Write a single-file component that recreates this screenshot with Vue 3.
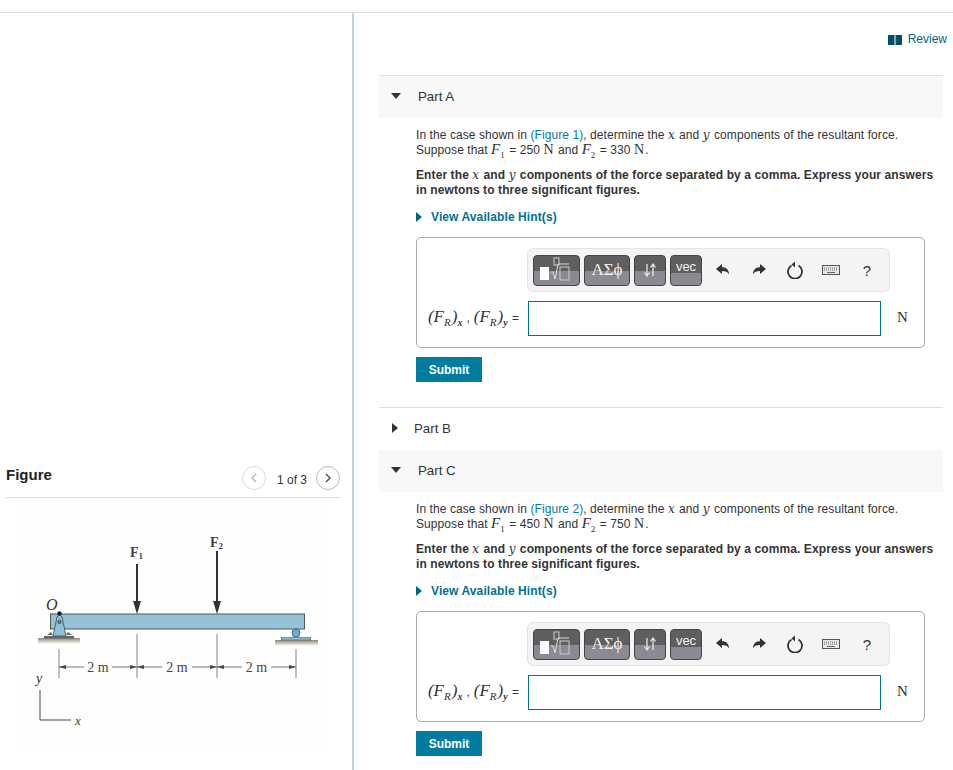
<script setup>
const parts = [
  { name: 'Part A', open: true, f1: 250, f2: 330, fig: 1 },
  { name: 'Part B', open: false },
  { name: 'Part C', open: true, f1: 450, f2: 750, fig: 2 }
]
const dims = [
  { x1: 59, x2: 137 },
  { x1: 137, x2: 217 },
  { x1: 217, x2: 296 }
]
</script>

<template>
  <div class="page">
    <aside class="left">
      <header class="fig-head">
        <h2>Figure</h2>
        <div class="pager">
          <button class="round off" aria-label="Previous">
            <svg width="10" height="12" viewBox="0 0 10 12"><path d="M7 2 3 6l4 4" /></svg>
          </button>
          <span class="count">1 of 3</span>
          <button class="round" aria-label="Next">
            <svg width="10" height="12" viewBox="0 0 10 12"><path d="M3 2l4 4-4 4" /></svg>
          </button>
        </div>
      </header>
      <svg class="diagram" width="305" height="250" viewBox="20 505 305 250">
        <defs>
          <linearGradient id="gnd" x1="0" y1="0" x2="0" y2="1">
            <stop offset="0" stop-color="#8f8673" />
            <stop offset="1" stop-color="#fefefe" />
          </linearGradient>
          <marker id="dimhead" markerWidth="7" markerHeight="4" refX="7" refY="2" orient="auto-start-reverse">
            <path d="M0 0 7 2 0 4z" fill="#444" />
          </marker>
        </defs>
        <rect x="20" y="505" width="305" height="250" fill="#fefefe" />
        <rect x="38" y="638" width="42" height="6" fill="url(#gnd)" />
        <rect x="275" y="640" width="43" height="6" fill="url(#gnd)" />
        <rect x="50.500" y="614" width="254" height="15" fill="#94c3d9" stroke="#555" stroke-width="1" />
        <path d="M53 636 57 617Q59.500 613 62 617L66 636z" fill="#8ec0d6" stroke="#444" stroke-width=".8" />
        <circle cx="59.500" cy="622" r="1.800" fill="#777" stroke="#333" stroke-width=".5" />
        <circle cx="59.500" cy="613.500" r="2.200" fill="#222" />
        <path d="M47 635l4-3 2 3zM66 635l2-3 4 3z" fill="#666" />
        <rect x="44" y="636" width="30" height="2.500" fill="#5f6668" />
        <circle cx="296" cy="633" r="4" fill="#6cb0ce" stroke="#345" stroke-width=".7" />
        <rect x="281.500" y="637.500" width="29" height="2.500" fill="#8cbdd3" stroke="#555" stroke-width=".6" />
        <g class="force">
          <line x1="137" y1="564" x2="137" y2="604" />
          <path d="M133 601h8l-4 13z" />
          <line x1="217" y1="551" x2="217" y2="604" />
          <path d="M213 601h8l-4 13z" />
        </g>
        <g class="dim-v">
          <line x1="59" y1="649" x2="59" y2="678" />
          <line x1="137" y1="634" x2="137" y2="678" />
          <line x1="217" y1="634" x2="217" y2="678" />
          <line x1="296" y1="649" x2="296" y2="678" />
        </g>
        <g v-for="d in dims" :key="d.x1" class="dim-h">
          <line :x1="d.x1" y1="667" :x2="d.x1 + 25" y2="667" marker-start="url(#dimhead)" />
          <line :x1="d.x2 - 25" y1="667" :x2="d.x2" y2="667" marker-end="url(#dimhead)" />
          <text :x="(d.x1 + d.x2) / 2" y="672" text-anchor="middle">2 m</text>
        </g>
        <text class="it" x="46" y="610" font-size="16">O</text>
        <text class="bd" x="130" y="557" font-size="14">F<tspan font-size="9" dy="2">1</tspan></text>
        <text class="bd" x="210" y="547" font-size="14">F<tspan font-size="9" dy="2">2</tspan></text>
        <text class="it" x="36" y="683" font-size="14">y</text>
        <path d="M40 690V720H71" fill="none" stroke="#444" stroke-width="1" />
        <text class="it" x="75" y="725" font-size="13">x</text>
      </svg>
    </aside>

    <main class="right">
      <div class="review">
        <svg width="14" height="11" viewBox="0 0 14 11"><path d="M0 1h6.500v10H0zM7.500 1H14v10H7.500z" /></svg>
        <span>Review</span>
      </div>
      <section v-for="p in parts" :key="p.name" class="part">
        <div v-if="!p.open" class="closed">
          <i class="tri-r dark"></i><span>{{ p.name }}</span>
        </div>
        <template v-else>
          <div class="opened">
            <i class="tri-d"></i><span>{{ p.name }}</span>
          </div>
          <div class="body">
            <p>In the case shown in <a>(Figure {{ p.fig }})</a>, determine the <em class="v">x</em> and <em class="v">y</em> components of the resultant force.<br>Suppose that <em class="m">F<sub>1</sub></em> = {{ p.f1 }} <b class="u">N</b> and <em class="m">F<sub>2</sub></em> = {{ p.f2 }} <b class="u">N</b>.</p>
            <p class="strong">Enter the <em class="v">x</em> and <em class="v">y</em> components of the force separated by a comma. Express your answers<br>in newtons to three significant figures.</p>
            <div class="hint"><i class="tri-r teal"></i><span>View Available Hint(s)</span></div>
            <div class="answer">
              <div class="toolbar">
                <button class="tb w47">
                  <svg width="41" height="26" viewBox="0 0 41 26">
                    <rect x="4" y="10" width="9" height="13" fill="#fff" />
                    <path d="M15 15l2 0 2 7 3-15h11" fill="none" stroke="#ddd" stroke-width="1" />
                    <rect x="24" y="10" width="9" height="13" fill="none" stroke="#ccc" />
                    <rect x="18" y="1" width="5" height="7" fill="none" stroke="#ccc" />
                  </svg>
                </button>
                <button class="tb w46 serif">ΑΣϕ</button>
                <button class="tb w32">
                  <svg width="14" height="16" viewBox="0 0 14 16"><path d="M4 2v11M1.500 10.500 4 14l2.500-3.500M10 14V3M7.500 5.500 10 2l2.500 3.500" fill="none" stroke="#eee" stroke-width="1.200" /></svg>
                </button>
                <button class="tb w32 vec">vec</button>
                <div class="tools">
                  <svg width="18" height="18" viewBox="0 0 18 18"><path d="M2 8l6-5v3.300c4.500 0 7 2.700 7 7.200-1.300-2.400-3.500-3.400-7-3.400V13z" fill="#333" /></svg>
                  <svg width="18" height="18" viewBox="0 0 18 18"><path d="M16 8l-6-5v3.300c-4.500 0-7 2.700-7 7.200 1.300-2.400 3.500-3.400 7-3.400V13z" fill="#333" /></svg>
                  <svg width="18" height="18" viewBox="0 0 18 18"><path d="M5.500 4.500a7 7 0 1 0 7 0" fill="none" stroke="#333" stroke-width="1.800" /><path d="M9 .5v6l-3.500-3z" fill="#333" /></svg>
                  <svg width="18" height="10" viewBox="0 0 18 10"><rect x=".5" y=".5" width="17" height="9" fill="#e8e8e8" stroke="#555" /><path d="M2 3h14M2 5h14" stroke="#666" stroke-dasharray="1 1" /><path d="M5 7.500h8" stroke="#666" /></svg>
                  <span class="q">?</span>
                </div>
              </div>
              <div class="row">
                <span class="label"><em class="m l">(F<sub>R</sub>)<sub class="s">x</sub></em><span class="comma">,</span><em class="m l">(F<sub>R</sub>)<sub class="s">y</sub></em> =</span>
                <input class="field" type="text" aria-label="Answer" />
                <span class="unit">N</span>
              </div>
            </div>
            <button class="submit">Submit</button>
          </div>
        </template>
      </section>
    </main>
  </div>
</template>

<style>
html, body { margin: 0; overflow: hidden; background: #fff; }
</style>

<style scoped>
.page {
  display: flex;
  height: 757px;
  margin-top: 12px;
  border-top: 1px solid #ddd;
  overflow: hidden;
  font-family: "Liberation Sans", Arial, sans-serif;
  color: #333;
  font-size: 12px;
}
.left {
  box-sizing: border-box;
  width: 354px;
  flex: none;
  border-right: 2px solid #c5d2e0;
  padding: 451px 12px 0 6px;
}
.fig-head {
  display: flex;
  align-items: center;
  justify-content: space-between;
  height: 33px;
  border-bottom: 1px solid #ddd;
}
.fig-head h2 {
  margin: 0 0 12px;
  font-size: 15px;
  line-height: 20px;
  color: #222;
}
.pager {
  display: flex;
  align-items: center;
  margin-top: 2px;
  margin-bottom: 7px;
}
.count { margin: 3px 9px 0 11px; }
.round {
  width: 24px;
  height: 24px;
  padding: 0;
  border: 1px solid #bbb;
  border-radius: 50%;
  background: #fff;
  display: flex;
  align-items: center;
  justify-content: center;
}
.round.off { border-color: #ddd; }
.round path { fill: none; stroke: #555; stroke-width: 1.500; }
.round.off path { stroke: #bbb; }
.diagram { display: block; margin: 7px 0 0 14px; }
.diagram text { font-family: "Liberation Serif", serif; fill: #444; }
.dim-h text { font-size: 14px; }
.diagram .it { font-style: italic; fill: #333; }
.diagram .bd { font-weight: bold; fill: #444; }
.force line { stroke: #333; stroke-width: 2; }
.force path { fill: #333; }
.dim-v line { stroke: #666; stroke-width: .8; }
.dim-h line { stroke: #777; stroke-width: 1; }

.right {
  flex: 1;
  min-width: 0;
  padding: 0 10px 0 25px;
}
.review {
  display: flex;
  align-items: center;
  justify-content: flex-end;
  gap: 6px;
  height: 62px;
  padding: 0 0 10px;
  box-sizing: border-box;
  margin-right: -4px;
  color: #00667f;
}
.review svg path { fill: #004f63; }
.part { border-top: 1px solid #ddd; }
.part + .part { margin-top: 24px; }
.part:nth-child(4) { margin-top: 0; border-top: none; }
.opened {
  display: flex;
  align-items: center;
  gap: 17px;
  box-sizing: border-box;
  height: 42px;
  padding: 0 0 2px 12px;
  background: #f8f8f8;
  font-size: 13.300px;
  color: #333;
}
.closed {
  display: flex;
  align-items: center;
  gap: 16px;
  box-sizing: border-box;
  height: 42px;
  padding: 0 0 2px 13px;
  font-size: 13.300px;
}
.tri-d {
  width: 0; height: 0;
  border-left: 5px solid transparent;
  border-right: 5px solid transparent;
  border-top: 6px solid #333;
}
.tri-r {
  width: 0; height: 0;
  border-top: 5px solid transparent;
  border-bottom: 5px solid transparent;
  border-left: 6px solid #333;
}
.tri-r.teal { border-left-color: #00667f; }
.body { padding: 10px 0 0 37px; }
.body p { margin: 0 0 10px; line-height: 15px; letter-spacing: .08px; white-space: nowrap; }
.body a { color: #007c9e; }
.strong { font-weight: bold; letter-spacing: .1px !important; }
.m { font-family: "Liberation Serif", serif; font-style: italic; font-size: 15px; color: #333; line-height: 0; letter-spacing: 0; }
.v { font-family: "DejaVu Serif", serif; font-style: italic; font-weight: normal; font-size: 12px; line-height: 0; letter-spacing: 0; margin: 0 1px 0 0; }
.m sub { font-size: 9px; font-style: normal; line-height: 0; margin: 0 1px 0 0; }
.u { font-family: "Liberation Serif", serif; font-size: 14px; font-weight: normal; line-height: 0; margin-right: 1px; }
.hint {
  display: flex;
  align-items: center;
  gap: 9px;
  height: 15px;
  margin-top: 11px;
  font-weight: bold;
  letter-spacing: .1px;
  color: #00718f;
}
.answer {
  box-sizing: border-box;
  height: 111px;
  margin: 13px 0 9px;
  border: 1px solid #aaa;
  border-radius: 5px;
  padding: 10px 0 0 110px;
  width: 509px;
}
.toolbar {
  box-sizing: border-box;
  display: flex;
  align-items: center;
  gap: 4px;
  width: 363px;
  height: 44px;
  padding-left: 5px;
  background: #f4f4f4;
  border: 1px solid #e4e4e4;
  border-radius: 6px;
}
.tb {
  height: 31px;
  padding: 0;
  border: 1px solid #444;
  border-radius: 4px;
  background: linear-gradient(#5f5f5f 0 52%, #8b8a93 52% 100%);
  color: #f2f2f2;
  display: flex;
  align-items: center;
  justify-content: center;
}
.w47 { width: 47px; }
.w46 { width: 46px; }
.w32 { width: 32px; }
.serif { font-family: "Liberation Serif", serif; font-size: 17px; }
.vec {
  font-family: "Liberation Sans", sans-serif;
  font-size: 13px;
  align-items: flex-start;
  padding-top: 3px;
  background: linear-gradient(#5f5f5f 0 58%, #8b8a93 58% 100%);
}
.tools {
  display: flex;
  align-items: center;
  gap: 18px;
  margin-left: 8px;
}
.q { font-size: 15px; width: 18px; text-align: center; }
.row {
  position: relative;
  display: flex;
  align-items: center;
  margin: 9px 0 0 1px;
  height: 35px;
}
.label {
  position: absolute;
  right: 100%;
  margin-right: 9px;
  padding-bottom: 2px;
  white-space: nowrap;
  font-size: 12px;
}
.l { font-size: 17px; }
.l sub { font-size: 11px; font-style: italic; }
.l sub.s { font-size: 10px; font-weight: bold; }
.comma { margin: 0 4px 0 3px; }
.field {
  box-sizing: border-box;
  width: 353px;
  height: 35px;
  border: 1px solid #00718f;
  padding: 0;
  outline: none;
  background: #fff;
}
.unit {
  font-family: "Liberation Serif", serif;
  font-size: 15px;
  margin-left: 16px;
  padding-bottom: 2px;
}
.submit {
  display: block;
  width: 66px;
  height: 25px;
  padding: 0;
  border: none;
  background: #007c9e;
  color: #fff;
  font-family: "Liberation Sans", sans-serif;
  font-size: 12px;
  font-weight: bold;
}
.part:nth-child(2) .submit, .part:nth-child(4) .submit { margin-bottom: 25px; }
</style>
